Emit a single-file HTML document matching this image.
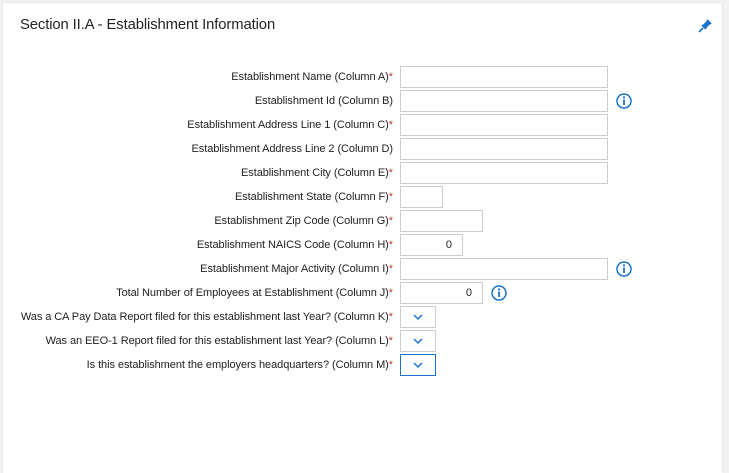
<!DOCTYPE html>
<html><head><style>
body{margin:0;width:729px;height:464px;background:#f2f2f2;font-family:"Liberation Sans",sans-serif;overflow:hidden;position:relative}
.card{position:absolute;left:3px;top:3px;width:719px;height:470px;background:#fff;box-shadow:0 0 2px rgba(0,0,0,.1)}
.title{position:absolute;left:20px;top:17px;font-size:14.8px;color:#222;letter-spacing:-0.1px}
.row{position:absolute;left:0;height:22px;width:729px}
.lbl{position:absolute;right:336px;top:5px;font-size:11px;letter-spacing:-0.07px;color:#222;white-space:nowrap}
.lbl b{color:#c0392b;font-weight:normal}
.in{position:absolute;left:400px;top:0;border:1px solid #ccc;background:#fff;font-size:11px;text-align:right;box-sizing:border-box;height:22px;padding:4px 10px 0 0;color:#222}
.sel{width:36px;text-align:center;padding:0}
.sel svg{margin-top:7px}
.info{position:absolute;left:616px;top:3px}
</style></head><body>
<div class="card"></div>
<div class="title">Section II.A - Establishment Information</div>
<svg style="position:absolute;left:697px;top:18px" width="16" height="16" viewBox="0 0 16 16"><path d="M2 14 L6 10 M10 2 L14 6 M11 3 L13 5 L9 9 L7 7Z M5 7 L9 11" fill="#1a73c8" stroke="#1a73c8" stroke-width="1.8"/></svg>

<div class="row" style="top:66px"><div class="lbl">Establishment Name (Column A)<b>*</b></div><div class="in" style="width:208px"></div></div>
<div class="row" style="top:90px"><div class="lbl">Establishment Id (Column B)</div><div class="in" style="width:208px"></div><svg class="info" width="16" height="16" viewBox="0 0 16 16"><circle cx="8" cy="8" r="7" fill="none" stroke="#1a73c8" stroke-width="1.5"/><rect x="7.1" y="6.5" width="1.8" height="5.5" fill="#1a73c8"/><circle cx="8" cy="4.4" r="1.1" fill="#1a73c8"/></svg></div>
<div class="row" style="top:114px"><div class="lbl">Establishment Address Line 1 (Column C)<b>*</b></div><div class="in" style="width:208px"></div></div>
<div class="row" style="top:138px"><div class="lbl">Establishment Address Line 2 (Column D)</div><div class="in" style="width:208px"></div></div>
<div class="row" style="top:162px"><div class="lbl">Establishment City (Column E)<b>*</b></div><div class="in" style="width:208px"></div></div>
<div class="row" style="top:186px"><div class="lbl">Establishment State (Column F)<b>*</b></div><div class="in" style="width:43px"></div></div>
<div class="row" style="top:210px"><div class="lbl">Establishment Zip Code (Column G)<b>*</b></div><div class="in" style="width:83px"></div></div>
<div class="row" style="top:234px"><div class="lbl">Establishment NAICS Code (Column H)<b>*</b></div><div class="in" style="width:63px">0</div></div>
<div class="row" style="top:258px"><div class="lbl">Establishment Major Activity (Column I)<b>*</b></div><div class="in" style="width:208px"></div><svg class="info" width="16" height="16" viewBox="0 0 16 16"><circle cx="8" cy="8" r="7" fill="none" stroke="#1a73c8" stroke-width="1.5"/><rect x="7.1" y="6.5" width="1.8" height="5.5" fill="#1a73c8"/><circle cx="8" cy="4.4" r="1.1" fill="#1a73c8"/></svg></div>
<div class="row" style="top:282px"><div class="lbl">Total Number of Employees at Establishment (Column J)<b>*</b></div><div class="in" style="width:83px">0</div><svg class="info" style="left:491px" width="16" height="16" viewBox="0 0 16 16"><circle cx="8" cy="8" r="7" fill="none" stroke="#1a73c8" stroke-width="1.5"/><rect x="7.1" y="6.5" width="1.8" height="5.5" fill="#1a73c8"/><circle cx="8" cy="4.4" r="1.1" fill="#1a73c8"/></svg></div>
<div class="row" style="top:306px"><div class="lbl">Was a CA Pay Data Report filed for this establishment last Year? (Column K)<b>*</b></div><div class="in sel"><svg width="10" height="6" viewBox="0 0 10 6"><path d="M1 1 L5 5 L9 1" fill="none" stroke="#1a73c8" stroke-width="1.5"/></svg></div></div>
<div class="row" style="top:330px"><div class="lbl">Was an EEO-1 Report filed for this establishment last Year? (Column L)<b>*</b></div><div class="in sel"><svg width="10" height="6" viewBox="0 0 10 6"><path d="M1 1 L5 5 L9 1" fill="none" stroke="#1a73c8" stroke-width="1.5"/></svg></div></div>
<div class="row" style="top:354px"><div class="lbl">Is this establishment the employers headquarters? (Column M)<b>*</b></div><div class="in sel" style="border-color:#1a73c8"><svg width="10" height="6" viewBox="0 0 10 6"><path d="M1 1 L5 5 L9 1" fill="none" stroke="#1a73c8" stroke-width="1.5"/></svg></div></div>
</body></html>
